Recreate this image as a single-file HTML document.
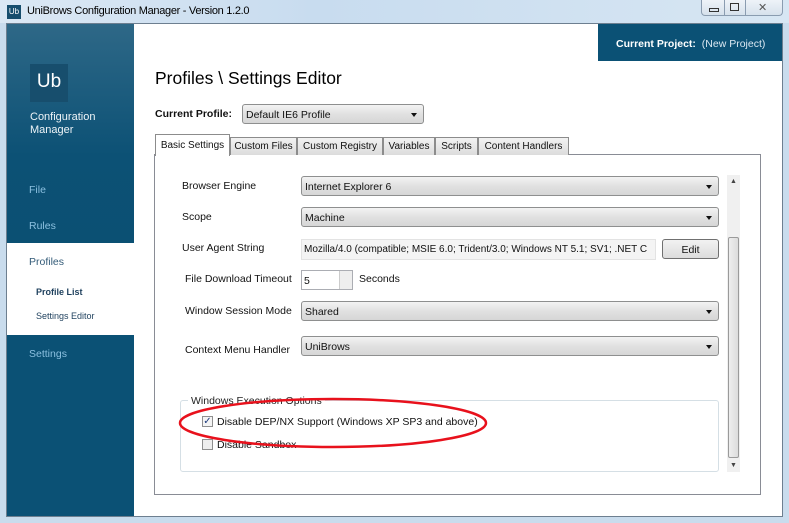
<!DOCTYPE html>
<html><head><style>
*{box-sizing:border-box;margin:0;padding:0}
body{width:789px;height:523px;overflow:hidden;background:#c9dced;font-family:"Liberation Sans",sans-serif;font-size:10.5px;color:#111;position:relative}
.a{position:absolute}
.dd{position:absolute;height:20px;border:1px solid #8e8f8f;border-radius:3px;background:linear-gradient(#f3f3f3,#e1e1e1 50%,#d6d6d6);padding:4px 0 0 3px;font-size:10.5px}
.dd:after{content:"";position:absolute;right:6px;top:8px;border-left:3px solid transparent;border-right:3px solid transparent;border-top:4px solid #111}
.lbl{position:absolute;font-size:10.5px;white-space:nowrap}
.tab{position:absolute;top:137px;height:18px;border:1px solid #8c8c8c;border-bottom:none;background:linear-gradient(#f2f2f2,#dcdcdc);padding-top:3px;font-size:10px;text-align:center;white-space:nowrap;overflow:hidden}
</style></head><body>
<div class="a" style="left:0;top:0;width:789px;height:23px;background:linear-gradient(90deg,#dbe8f4,#c8dcef 40%,#d7e6f3)"></div>
<div class="a" style="left:7px;top:5px;width:14px;height:14px;background:#174e6d;color:#fff;font-size:8px;text-align:center;line-height:14px">Ub</div>
<div class="a" style="left:27px;top:5px;font-size:11px;letter-spacing:-0.3px;color:#000">UniBrows Configuration Manager - Version 1.2.0</div>
<div class="a" style="left:701px;top:0;width:82px;height:16px;border:1px solid #8a9cb0;border-top:none;border-radius:0 0 4px 4px;background:linear-gradient(#eef3f8,#d6e1ec)"></div>
<div class="a" style="left:724px;top:0;width:1px;height:16px;background:#8a9cb0"></div>
<div class="a" style="left:745px;top:0;width:1px;height:16px;background:#8a9cb0"></div>
<div class="a" style="left:709px;top:8px;width:10px;height:4px;border:1px solid #333"></div>
<div class="a" style="left:730px;top:3px;width:9px;height:8px;border:1px solid #333"></div>
<div class="a" style="left:758px;top:1px;font-size:11px;color:#555">✕</div>
<div class="a" style="left:6px;top:23px;width:777px;height:494px;background:#fff;border:1px solid #6d7f90"></div>
<div class="a" style="left:7px;top:24px;width:127px;height:219px;background:linear-gradient(#2e6887,#0c5175 60%,#0b5073)"></div>
<div class="a" style="left:30px;top:64px;width:38px;height:38px;background:#174e6d;color:#fff;font-size:19px;text-align:center;line-height:36px">Ub</div>
<div class="a" style="left:30px;top:111px;color:#eef4f8;font-size:11px;line-height:13px">Configuration<br>Manager</div>
<div class="a" style="left:29px;top:184px;color:#8cc0e0;font-size:10.5px">File</div>
<div class="a" style="left:29px;top:220px;color:#8cc0e0;font-size:10.5px">Rules</div>
<div class="a" style="left:29px;top:256px;color:#335b78;font-size:10.5px">Profiles</div>
<div class="a" style="left:36px;top:287px;color:#1d3f5c;font-size:9px;font-weight:bold">Profile List</div>
<div class="a" style="left:36px;top:311px;color:#1d3f5c;font-size:9px">Settings Editor</div>
<div class="a" style="left:7px;top:335px;width:127px;height:181px;background:#0b5175"></div>
<div class="a" style="left:29px;top:348px;color:#8cc0e0;font-size:10.5px">Settings</div>
<div class="a" style="left:598px;top:24px;width:184px;height:37px;background:#0b5175"></div>
<div class="a" style="left:616px;top:38px;color:#fff;font-size:10.5px"><b>Current Project:</b>&nbsp; <span style="color:#dbe8f2">(New Project)</span></div>
<div class="a" style="left:155px;top:68px;font-size:17.5px;color:#000">Profiles \ Settings Editor</div>
<div class="a" style="left:155px;top:108px;font-weight:bold;font-size:10.5px">Current Profile:</div>
<div class="dd" style="left:242px;top:104px;width:182px">Default IE6 Profile</div>
<div class="a" style="left:154px;top:154px;width:607px;height:341px;border:1px solid #898c95"></div>
<div class="tab" style="left:155px;top:134px;height:22px;width:75px;background:#fff;padding-top:5px;z-index:2">Basic Settings</div>
<div class="tab" style="left:230px;width:67px">Custom Files</div>
<div class="tab" style="left:297px;width:86px">Custom Registry</div>
<div class="tab" style="left:383px;width:52px">Variables</div>
<div class="tab" style="left:435px;width:43px">Scripts</div>
<div class="tab" style="left:478px;width:91px">Content Handlers</div>
<div class="lbl" style="left:182px;top:180px">Browser Engine</div>
<div class="dd" style="left:301px;top:176px;width:418px">Internet Explorer 6</div>
<div class="lbl" style="left:182px;top:211px">Scope</div>
<div class="dd" style="left:301px;top:207px;width:418px">Machine</div>
<div class="lbl" style="left:182px;top:242px">User Agent String</div>
<div class="a" style="left:301px;top:239px;width:355px;height:21px;border:1px solid #e3e3e3;background:#f4f4f4;padding:4px 0 0 2px;overflow:hidden;white-space:nowrap;font-size:10px">Mozilla/4.0 (compatible; MSIE 6.0; Trident/3.0; Windows NT 5.1; SV1; .NET C</div>
<div class="a" style="left:662px;top:239px;width:57px;height:20px;border:1px solid #707070;border-radius:3px;background:linear-gradient(#f2f2f2,#dcdcdc);text-align:center;padding-top:4px">Edit</div>
<div class="lbl" style="left:185px;top:273px">File Download Timeout</div>
<div class="a" style="left:301px;top:270px;width:52px;height:20px;border:1px solid #abadb3;padding:4px 0 0 2px">5</div>
<div class="a" style="left:339px;top:271px;width:13px;height:18px;border-left:1px solid #ccc;background:#eee"></div>
<div class="lbl" style="left:359px;top:273px">Seconds</div>
<div class="lbl" style="left:185px;top:305px">Window Session Mode</div>
<div class="dd" style="left:301px;top:301px;width:418px">Shared</div>
<div class="lbl" style="left:185px;top:344px">Context Menu Handler</div>
<div class="dd" style="left:301px;top:336px;width:418px">UniBrows</div>
<div class="a" style="left:180px;top:400px;width:539px;height:72px;border:1px solid #d5dfe5;border-radius:3px"></div>
<div class="a" style="left:188px;top:395px;background:#fff;padding:0 3px;font-size:10.5px;color:#222">Windows Execution Options</div>
<div class="a" style="left:202px;top:416px;width:11px;height:11px;border:1px solid #8f8f8f;background:#f4f4f4;font-size:10px;line-height:9px;text-align:center;color:#1c3b7c">✓</div>
<div class="lbl" style="left:217px;top:416px">Disable DEP/NX Support (Windows XP SP3 and above)</div>
<div class="a" style="left:202px;top:439px;width:11px;height:11px;border:1px solid #8f8f8f;background:#eee"></div>
<div class="lbl" style="left:217px;top:439px">Disable Sandbox</div>
<svg class="a" style="left:176px;top:396px" width="316" height="60"><ellipse cx="157" cy="27" rx="153" ry="24" fill="none" stroke="#e8111c" stroke-width="2.5"/></svg>
<div class="a" style="left:727px;top:175px;width:13px;height:297px;background:#f0f0f0"></div>
<div class="a" style="left:728px;top:237px;width:11px;height:221px;border:1px solid #9a9a9a;border-radius:2px;background:linear-gradient(90deg,#eee,#dcdcdc)"></div>
<div class="a" style="left:730px;top:178px;font-size:7px;color:#444">▲</div>
<div class="a" style="left:730px;top:462px;font-size:7px;color:#444">▼</div>
</body></html>
